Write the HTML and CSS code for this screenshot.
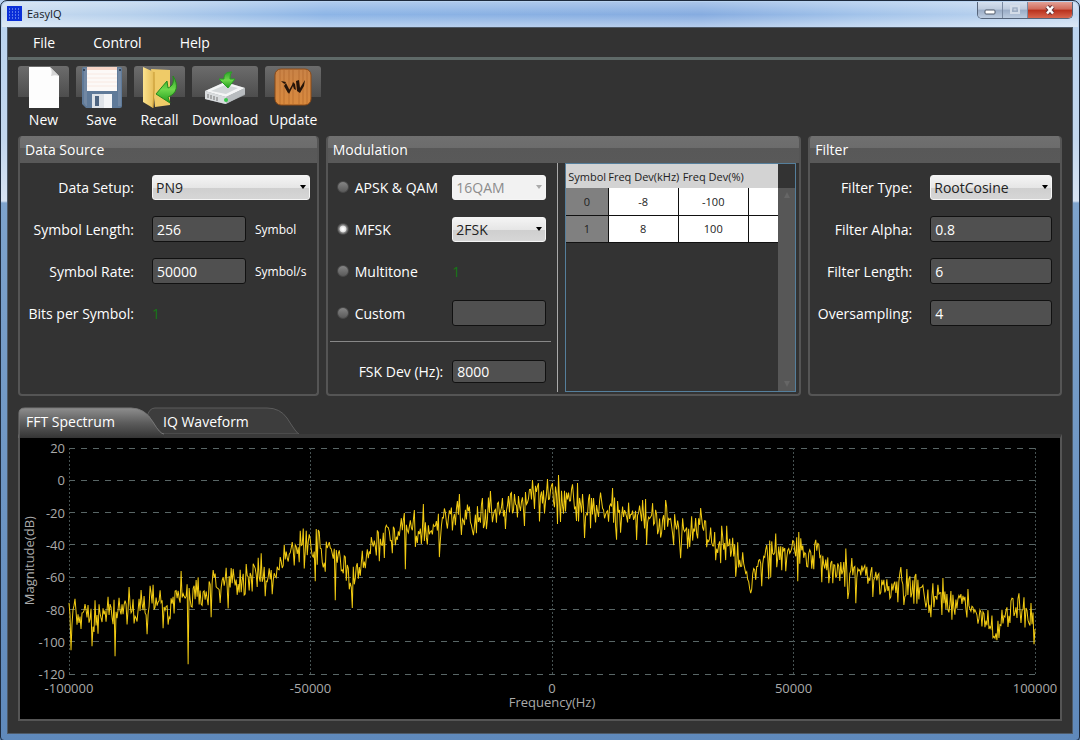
FILE: index.html
```
<!DOCTYPE html>
<html lang="en">
<head>
    <meta charset="UTF-8">
    <meta name="viewport" content="width=device-width, initial-scale=1.0">
    <title>EasyIQ</title>
    <link rel="stylesheet" href="styles.css">
</head>
<body>
    <div class="titlebar">
        <svg class="logo" width="15" height="15" viewBox="0 0 15 15">
            <rect width="15" height="15" fill="#0a2fd8"/>
            <path d="M2 3h12M2 6h12M2 9h12M2 12h12" stroke="#a9c4ff" stroke-width="1" stroke-dasharray="1 2"/>
        </svg>
        <span class="title">EasyIQ</span>
        <div class="winButtons">
            <button class="min" aria-label="Minimize">
                <svg width="12" height="10" viewBox="0 0 12 10"><rect x="1" y="5" width="10" height="4" rx="1" fill="#fff" stroke="#4e5868"/></svg>
            </button>
            <button class="max" aria-label="Maximize">
                <svg width="12" height="10" viewBox="0 0 12 10"><rect x="2" y="1" width="8" height="7" fill="none" stroke="#d3dce8" stroke-width="2"/><rect x="4" y="3" width="4" height="3" fill="#c3cfdf" stroke="#98a7bc"/></svg>
            </button>
            <button class="close" aria-label="Close">
                <svg width="12" height="10" viewBox="0 0 12 10"><path d="M3 1.500L9 8.500M9 1.500L3 8.500" stroke="#66353a" stroke-width="4.500"/><path d="M3 1.500L9 8.500M9 1.500L3 8.500" stroke="#fff" stroke-width="2.500"/></svg>
            </button>
        </div>
    </div>

    <div class="app">
        <div class="menu">
            <button>File</button>
            <button>Control</button>
            <button>Help</button>
        </div>

        <div class="toolbar">
            <button>
                <svg width="42" height="42" viewBox="0 0 42 42">
                    <path d="M6 1h21l9 9v32H6z" fill="#fdfdfd"/>
                    <path d="M27 1c2 3 2 6 1 9 3-1 5-1 8 0z" fill="#d5d5d5"/>
                </svg>
                New
            </button>
            <button>
                <svg width="42" height="42" viewBox="0 0 42 42">
                    <path d="M3 1h36q2 0 2 2v37q0 2-2 2H5l-4-4V3q0-2 2-2z" fill="#5f7a99"/>
                    <path d="M3 2h3v38H5l-2-3zM37 2h3v38h-3z" fill="#7288a3"/>
                    <path d="M6 1h30v24H6z" fill="#fcf9f7"/>
                    <path d="M6 1h30v3H6z" fill="#f7d5c7"/>
                    <path d="M6 8h30M6 12h30M6 16h30M6 20h30" stroke="#f8e9e2"/>
                    <path d="M11 28h20v14H11z" fill="#dfe3e8"/>
                    <path d="M23 28h8v14h-8z" fill="#f4f5f7"/>
                    <rect x="14" y="30" width="4" height="10" fill="#4f6580"/>
                    <path d="M2 3h2v2H2zM38 3h2v2h-2z" fill="#35485e"/>
                </svg>
                Save
            </button>
            <button>
                <svg width="42" height="42" viewBox="0 0 42 42">
                    <defs>
                        <linearGradient id="folder"><stop offset="0" stop-color="#fbe28d"/><stop offset="1" stop-color="#e3ba55"/></linearGradient>
                        <linearGradient id="green" x2="0" y2="1"><stop offset="0" stop-color="#2fa32a"/><stop offset=".5" stop-color="#6fd84c"/><stop offset="1" stop-color="#1f9a1c"/></linearGradient>
                    </defs>
                    <path d="M12 3l19 1v35l-15 2z" fill="#efcb68"/>
                    <path d="M4 1l11 5 1 17-2 19-10-6z" fill="url(#folder)"/>
                    <path d="M15 6v17l-1 19" fill="none" stroke="#c79a35"/>
                    <path d="M34 10c6 9 4 18-5 21l2 6-14-9 11-13 1 7c5-2 6-6 5-12z" fill="url(#green)" stroke="#268a1d"/>
                </svg>
                Recall
            </button>
            <button>
                <svg width="42" height="42" viewBox="0 0 42 42">
                    <path d="M1 25l20-9 20 6v7L21 38 1 33z" fill="#9ea2a5"/>
                    <path d="M1 25l20-9 20 6-19 9z" fill="#f4f5f6"/>
                    <path d="M7 25l14-6 13 3-12 6z" fill="#d3d7d9"/>
                    <path d="M1 25l21 6v7L1 33z" fill="#d9dcde"/>
                    <path d="M22 31l19-9v6l-19 10z" fill="#b8bcbf"/>
                    <path d="M4 28v4M7 29v4M10 30v4M13 31v4" stroke="#777"/>
                    <circle cx="22" cy="34" r="2" fill="#36c94a"/>
                    <path d="M28 6c-6 0-8 2-8 7h-5l9 9 7-9h-5c0-3 0-5 2-7z" fill="url(#green)" stroke="#29a325"/>
                </svg>
                Download
            </button>
            <button class="update">
                <svg width="42" height="42" viewBox="0 0 42 42">
                    <defs><linearGradient id="wood" x2="0" y2="1"><stop offset="0" stop-color="#c98347"/><stop offset="1" stop-color="#d98a3e"/></linearGradient></defs>
                    <rect x="3" y="3" width="36" height="36" rx="6" fill="url(#wood)" stroke="#8c4a17"/>
                    <path d="M8 4v34M12 4v34M17 4v34M21 4v34M27 4v34M31 4v34M35 4v34" stroke="#a65d24" opacity=".5"/>
                    <path d="M9 15l5 1-1 2-2-1zM14 17l4 8-2 2-4-7zM16 26l4-7 1-3 2 2 1 6-2-1-1-3-4 8z" fill="#24140a"/>
                    <path d="M24 15l3-1 1 8 5-8-1 6-4 7-3-2z" fill="#24140a"/>
                </svg>
                Update
            </button>
        </div>

        <div class="panels">
            <div class="panel">
                <h2>Data Source</h2>
                <div class="form source">
                    <label for="setup">Data Setup:</label>
                    <div class="select wide"><select id="setup"><option>PN9</option></select></div>
                    <label for="length">Symbol Length:</label>
                    <input id="length" type="text" value="256">
                    <span class="unit">Symbol</span>
                    <label for="rate">Symbol Rate:</label>
                    <input id="rate" type="text" value="50000">
                    <span class="unit">Symbol/s</span>
                    <label for="bits">Bits per Symbol:</label>
                    <output id="bits">1</output>
                </div>
            </div>

            <div class="panel">
                <h2>Modulation</h2>
                <div class="modulation">
                    <div class="modes">
                        <div class="form types">
                            <label><input type="radio" name="mode">APSK &amp; QAM</label>
                            <div class="select"><select aria-label="QAM type" disabled><option>16QAM</option></select></div>
                            <label><input type="radio" name="mode" checked>MFSK</label>
                            <div class="select"><select aria-label="FSK type"><option>2FSK</option></select></div>
                            <label><input type="radio" name="mode">Multitone</label>
                            <output>1</output>
                            <label><input type="radio" name="mode">Custom</label>
                            <input type="text" aria-label="Custom">
                        </div>
                        <div class="form dev">
                            <label for="dev">FSK Dev (Hz):</label>
                            <input id="dev" type="text" value="8000">
                        </div>
                    </div>
                    <div class="symbols">
                        <table>
                            <thead>
                                <tr><th>Symbol</th><th>Freq Dev(kHz)</th><th>Freq Dev(%)</th><th></th></tr>
                            </thead>
                            <tbody>
                                <tr><td>0</td><td>-8</td><td>-100</td><td></td></tr>
                                <tr><td>1</td><td>8</td><td>100</td><td></td></tr>
                            </tbody>
                        </table>
                        <div class="scroll"><span class="up"></span><span class="down"></span></div>
                    </div>
                </div>
            </div>

            <div class="panel">
                <h2>Filter</h2>
                <div class="form filter">
                    <label for="type">Filter Type:</label>
                    <div class="select"><select id="type"><option>RootCosine</option></select></div>
                    <label for="alpha">Filter Alpha:</label>
                    <input id="alpha" type="text" value="0.8">
                    <label for="taps">Filter Length:</label>
                    <input id="taps" type="text" value="6">
                    <label for="over">Oversampling:</label>
                    <input id="over" type="text" value="4">
                </div>
            </div>
        </div>

        <div class="tabs">
            <button class="tab active">
                <svg width="146" height="31" viewBox="0 0 146 31">
                    <defs><linearGradient id="tabfill" x2="0" y2="1"><stop offset="0" stop-color="#8e8e8e"/><stop offset=".5" stop-color="#5c5c5c"/><stop offset="1" stop-color="#343434"/></linearGradient></defs>
                    <path d="M1 31V6q0-5 6-5h106q14 0 22 14 7 12 11 12v4z" fill="url(#tabfill)"/>
                    <path d="M1 31V6q0-5 6-5h106q14 0 22 14 7 12 11 12" fill="none" stroke="#777"/>
                </svg>
                <span>FFT Spectrum</span>
            </button>
            <button class="tab">
                <svg width="152" height="31" viewBox="0 0 152 31">
                    <path d="M0 10Q2 1 8 1h112q13 0 20 10 10 16 12 16H16Q9 26 0 10z" fill="#3d3d3d" stroke="#5c5c5c"/>
                </svg>
                <span>IQ Waveform</span>
            </button>
        </div>

        <div class="chart">
            <div class="ytitle">Magnitude(dB)</div>
            <div class="ylabels">
                <span>20</span><span>0</span><span>-20</span><span>-40</span><span>-60</span><span>-80</span><span>-100</span><span>-120</span>
            </div>
            <svg class="plot" viewBox="0 0 965 226" preserveAspectRatio="none">
                <g class="grid"></g>
                <polyline class="trace"/>
            </svg>
            <div class="xlabels">
                <span>-100000</span><span>-50000</span><span>0</span><span>50000</span><span>100000</span>
            </div>
            <div class="xtitle">Frequency(Hz)</div>
        </div>
    </div>

    <script src="chart.js"></script>
</body>
</html>
```
FILE: styles.css
```
* {
    box-sizing: border-box;
    margin: 0;
    padding: 0;
}

body {
    display: flex;
    flex-direction: column;
    min-height: 100vh;
    padding: 1px 6px 6px;
    border: 1px solid #1d2a3d;
    border-radius: 7px 7px 4px 4px;
    background: linear-gradient(#b9d3f0 0, #c3d7ee 140px, #d7e3f2 201px, #7ea3cc 203px, #5f89bb 100%);
    color: #fff;
    font-family: 'Open Sans', 'Noto Sans', sans-serif;
    font-size: 14px;
}

button, input, select {
    font: inherit;
    color: inherit;
}

button {
    border: none;
    background: none;
}

/* title bar */
.titlebar {
    display: flex;
    height: 25px;
    margin: 0 -5px;
    padding: 0 5px;
    border-radius: 6px 6px 0 0;
    background: linear-gradient(to bottom, rgba(255, 255, 255, .3), rgba(255, 255, 255, 0) 50%, rgba(255, 255, 255, .4)),
        linear-gradient(to right, #c9dcf0 0, #b6d0ec 12%, #8db5e6 30%, #86ace0 65%, #a2c3ea 80%, #c3d8f0 100%);
}

.logo {
    margin-top: 4px;
}

.title {
    flex: 1;
    margin-left: 5px;
    color: #15191f;
    font-size: 11px;
    line-height: 24px;
}

.winButtons {
    display: flex;
    height: 17px;
    border: 1px solid #56657b;
    border-top: none;
    border-radius: 0 0 5px 5px;
    overflow: hidden;
}

.winButtons button {
    display: flex;
    align-items: center;
    justify-content: center;
    width: 25px;
    border-right: 1px solid #7a8aa2;
    background: linear-gradient(#d5e0ee, #bccadd 45%, #9aacc6 50%, #bccce0);
}

.winButtons .close {
    width: 44px;
    border: none;
    background: linear-gradient(#e3a196, #cf6a5a 45%, #b8301c 50%, #d8664e);
}

/* application */
.app {
    flex: 1;
    display: flex;
    flex-direction: column;
    padding-bottom: 12px;
    border: 1px solid #4e5a68;
    background: #333;
}

.menu {
    display: flex;
    gap: 38px;
    height: 32px;
    padding: 0 25px;
    border-bottom: 3px solid #5f6a68;
}

.toolbar {
    display: flex;
    gap: 7px;
    padding: 6px 10px 4px;
}

.toolbar button {
    display: flex;
    flex-direction: column;
    align-items: center;
    min-width: 51px;
    height: 66px;
    border-radius: 3px;
    background: linear-gradient(#6c6c6c, #4d4d4d) no-repeat top / 100% 31px;
    line-height: 24px;
}

.toolbar .update {
    min-width: 56px;
}

.panels {
    display: grid;
    grid-template-columns: 301fr 476fr 254fr;
    gap: 7px;
    height: 260px;
    margin: 0 10px;
}

.panel {
    display: flex;
    flex-direction: column;
    border: 2px solid #555;
    border-top: none;
    border-radius: 4px;
    overflow: hidden;
}

.panel h2 {
    height: 27px;
    padding: 0 5px;
    background: linear-gradient(#707070, #6c6c6c 12px, #585858 12px, #595959);
    font-size: 14px;
    font-weight: normal;
    line-height: 28px;
}

.form {
    display: grid;
    grid-auto-rows: 42px;
    align-items: center;
    padding-top: 3px;
}

.form label {
    text-align: right;
    white-space: nowrap;
}

.form input[type="text"] {
    width: 100%;
    min-width: 0;
    height: 26px;
    padding: 0 4px;
    border: 1px solid #111;
    border-radius: 3px;
    background: #505050;
}

.form output {
    color: #157a15;
}

.source {
    grid-template-columns: 114px 94px 1fr;
    column-gap: 18px;
    padding-right: 7px;
}

.source .wide {
    grid-column: 2 / 4;
}

.source .unit {
    margin-left: -9px;
    font-size: 12px;
}

.select {
    position: relative;
}

.select select {
    appearance: none;
    width: 100%;
    height: 25px;
    padding: 0 3px;
    border: 1px solid #f5f5f5;
    border-radius: 3px;
    background: linear-gradient(#f4f4f4, #e6e6e6 50%, #cfcfcf 52%, #d6d6d6);
    color: #222;
    vertical-align: middle;
}

.select::after {
    content: '';
    position: absolute;
    top: 10px;
    right: 4px;
    border: 3px solid transparent;
    border-top: 4px solid #000;
    border-bottom: none;
}

.select select:disabled {
    background: #f2f2f2;
    color: #8c8c8c;
    opacity: 1;
}

.select:has(:disabled)::after {
    border-top-color: #aaa;
}

.filter {
    grid-template-columns: 102px 1fr;
    column-gap: 18px;
    padding-right: 8px;
}

.modulation {
    flex: 1;
    display: flex;
    gap: 7px;
    padding: 0 3px 2px 2px;
}

.modes {
    flex: 1;
    padding-right: 6px;
    border-right: 1px solid #aaa;
}

.types {
    grid-template-columns: 1fr 94px;
    padding: 3px 5px 7px 7px;
    border-bottom: 1px solid #888;
}

.types label {
    display: flex;
    align-items: center;
    gap: 6px;
}

.types input[type="radio"] {
    appearance: none;
    width: 12px;
    height: 12px;
    border: 1px solid #484848;
    border-radius: 50%;
    background: linear-gradient(#858585, #5a5a5a);
}

.types input[type="radio"]:checked {
    background: radial-gradient(#fff 1px, #ddd 3px, #777 4px);
}

.dev {
    grid-template-columns: 1fr 94px;
    column-gap: 9px;
    padding: 8px 5px 0 0;
}

.form.dev input {
    height: 23px;
}

/* symbol table */
.symbols {
    display: flex;
    justify-content: space-between;
    width: 231px;
    border: 1px solid #557f9c;
}

.symbols table {
    align-self: flex-start;
    width: 212px;
    table-layout: fixed;
    border-collapse: collapse;
    background: #fff;
    color: #222;
    font-size: 11px;
}

.symbols th {
    width: 70px;
    height: 24px;
    background: #d3d3d3;
    font-weight: normal;
    white-space: nowrap;
}

.symbols th:first-child {
    width: 42px;
}

.symbols th:last-child {
    width: 30px;
}

.symbols td {
    height: 27px;
    border-right: 1px solid #111;
    border-bottom: 1px solid #111;
    text-align: center;
}

.symbols td:first-child {
    background: #808080;
}

.symbols td:last-child {
    border-right: none;
}

.scroll {
    display: flex;
    flex-direction: column;
    align-items: center;
    justify-content: space-between;
    width: 17px;
    margin-top: 24px;
    padding: 4px 0;
    background: #575757;
}

.scroll span {
    border: 3px solid transparent;
}

.scroll .up {
    border-bottom: 6px solid #666;
    border-top: none;
}

.scroll .down {
    border-top: 6px solid #666;
    border-bottom: none;
}

/* tabs */
.tabs {
    display: flex;
    height: 27px;
    margin: 11px 10px 0;
}

.tab {
    display: grid;
    height: 31px;
    margin-right: -17px;
    text-align: left;
}

.tab svg, .tab span {
    grid-area: 1 / 1;
}

.tab span {
    padding-left: 16px;
    line-height: 30px;
}

.tab.active {
    z-index: 1;
}

.tab.active span {
    padding-left: 8px;
}

/* chart */
.chart {
    flex: 1;
    display: grid;
    grid-template-columns: 19px 30px 1fr;
    grid-template-rows: 1fr 21px 24px;
    margin: 0 10px;
    padding: 10px 25px 0 0;
    border: 2px solid #555;
    border-top: 4px solid #3a3a3a;
    background: #000;
    color: #aaa;
    font-size: 13px;
}

.ytitle {
    writing-mode: vertical-rl;
    transform: rotate(180deg);
    text-align: center;
    line-height: 19px;
}

.ylabels {
    display: flex;
    flex-direction: column;
    justify-content: space-between;
    margin: -7px 4px -7px -10px;
    text-align: right;
    line-height: 14px;
}

.plot {
    width: 100%;
    height: 100%;
    min-height: 0;
    overflow: visible;
}

.grid path {
    fill: none;
    stroke: #596666;
    stroke-dasharray: 6 6;
    vector-effect: non-scaling-stroke;
    shape-rendering: crispEdges;
}

.grid .vertical {
    stroke-dasharray: 2 2;
    stroke: #465252;
}

.trace {
    fill: none;
    stroke: #f2cb12;
    stroke-width: 1;
    vector-effect: non-scaling-stroke;
}

.xlabels {
    grid-column: 3;
    display: flex;
    justify-content: space-between;
    padding-top: 7px;
    line-height: 14px;
}

.xlabels span {
    display: flex;
    justify-content: center;
    width: 0;
}

.xtitle {
    grid-column: 3;
    text-align: center;
    line-height: 14px;
}
```
FILE: chart.js
```
const grid = document.querySelector('.grid')
const trace = document.querySelector('.trace')

// average level of the spectrum, [x, y] in plot units
const level = [
    [0, 170], [6, 166], [26, 168], [46, 166], [61, 163], [76, 155], [91, 153], [106, 149],
    [119, 145], [136, 143], [151, 138], [171, 131], [186, 127], [196, 121], [211, 113],
    [221, 105], [231, 98], [241, 94], [251, 98], [259, 96], [266, 107], [276, 118],
    [283, 131], [289, 118], [296, 108], [306, 98], [316, 92], [331, 84], [346, 82],
    [361, 80], [376, 70], [396, 68], [421, 60], [441, 56], [456, 52], [471, 45],
    [483, 44], [491, 46], [506, 51], [521, 55], [536, 60], [551, 64], [571, 70],
    [591, 75], [611, 78], [631, 82], [646, 87], [661, 97], [671, 112], [681, 134],
    [688, 122], [696, 108], [706, 100], [716, 97], [726, 98], [736, 104], [751, 108],
    [771, 118], [791, 127], [811, 133], [831, 137], [851, 143], [871, 150], [886, 152],
    [901, 157], [911, 166], [921, 176], [927, 184], [934, 168], [941, 162], [951, 157],
    [959, 164], [965, 184]
]

// single bins that stand out
const peaks = [
    [2, 202], [23, 198], [46, 208], [60, 139], [78, 186], [94, 180], [112, 123], [119, 216],
    [142, 169], [144, 122], [162, 120], [196, 148], [247, 81], [246, 133], [266, 152],
    [282, 139], [302, 89], [335, 65], [336, 121], [345, 62], [354, 56], [370, 109],
    [390, 46], [392, 87], [414, 80], [421, 43], [436, 81], [455, 78], [463, 32],
    [478, 31], [488, 76], [489, 27], [508, 35], [515, 90], [543, 40], [567, 92],
    [577, 97], [576, 51], [596, 52], [604, 97], [611, 110], [620, 99], [631, 60],
    [656, 112], [681, 145], [692, 138], [699, 131], [712, 122], [729, 84], [728, 133],
    [752, 134], [759, 135], [779, 144], [786, 155], [782, 110], [837, 121], [861, 169],
    [873, 130], [927, 192], [942, 150], [964, 196]
]

let seed = 17
function random() {
    seed = (seed * 16807) % 2147483647
    return seed / 2147483647
}

function levelAt(x) {
    const i = Math.max(1, level.findIndex(p => p[0] >= x))
    const [x0, y0] = level[i - 1]
    const [x1, y1] = level[i]
    return y0 + (y1 - y0) * (x - x0) / (x1 - x0)
}

function drawGrid() {
    for (let i = 0; i < 8; i++) {
        addLine(`M0 ${i * 226 / 7}H965`, 'horizontal')
    }
    for (let i = 0; i < 5; i++) {
        addLine(`M${i * 965 / 4} 0V226`, 'vertical')
    }
}

function addLine(d, name) {
    const path = document.createElementNS('http://www.w3.org/2000/svg', 'path')
    path.setAttribute('d', d)
    path.setAttribute('class', name)
    grid.appendChild(path)
}

function drawTrace() {
    const points = []
    for (let x = 0; x <= 965; x++) {
        const peak = peaks.find(p => p[0] === x)
        let y = levelAt(x) + (random() + random() - 1) * 20
        if (random() > .86) {
            y += random() * 20
        }
        points.push(x + ',' + (peak ? peak[1] : y.toFixed(1)))
    }
    trace.setAttribute('points', points.join(' '))
}

drawGrid()
drawTrace()
```
